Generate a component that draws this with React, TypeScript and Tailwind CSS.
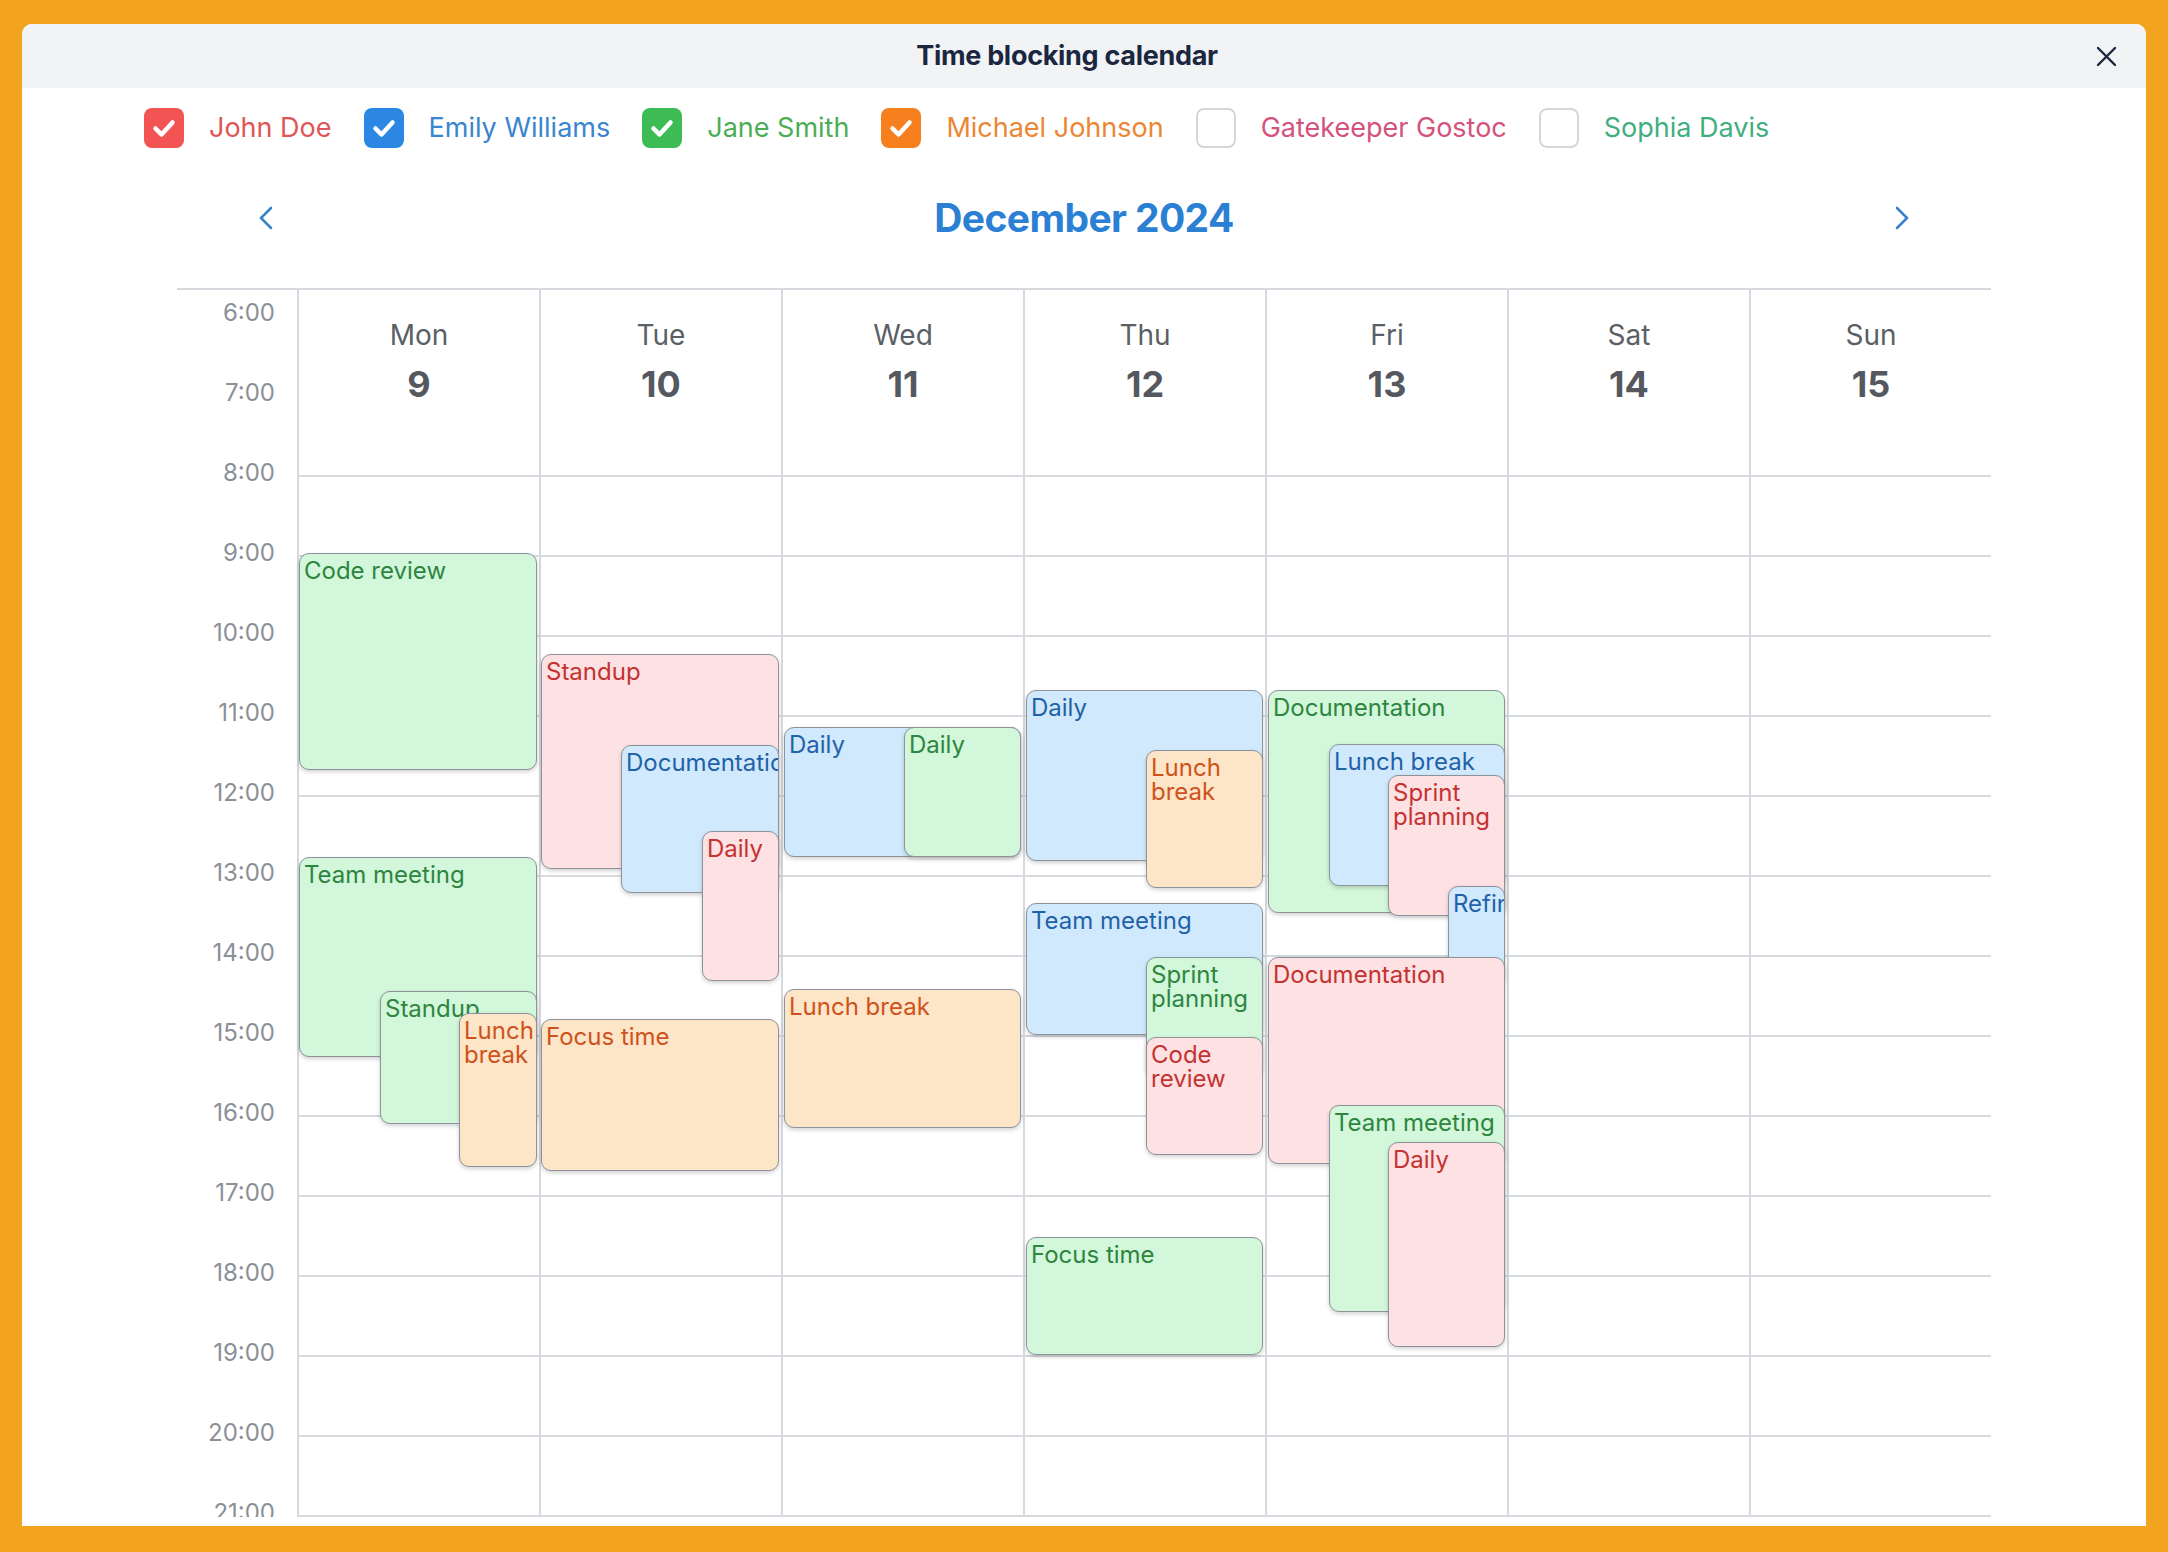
import React from "react";

type Color = "g" | "p" | "b" | "o";
type Ev = { day: number; title: string; top: number; h: number; left: number; c: Color };

const evStyles: Record<Color, string> = {
  g: "bg-[#d2f7da] text-[#2e8540]",
  p: "bg-[#fde1e3] text-[#c53232]",
  b: "bg-[#d1e9fc] text-[#1f62a8]",
  o: "bg-[#fde5c8] text-[#cf521c]",
};

const events: Ev[] = [
  { day: 0, title: "Code review", top: 78, h: 217, left: 0, c: "g" },
  { day: 0, title: "Team meeting", top: 382, h: 200, left: 0, c: "g" },
  { day: 0, title: "Standup", top: 516, h: 133, left: 81, c: "g" },
  { day: 0, title: "Lunch break", top: 538, h: 154, left: 160, c: "o" },
  { day: 1, title: "Standup", top: 179, h: 215, left: 0, c: "p" },
  { day: 1, title: "Documentation", top: 270, h: 148, left: 80, c: "b" },
  { day: 1, title: "Daily", top: 356, h: 150, left: 161, c: "p" },
  { day: 1, title: "Focus time", top: 544, h: 152, left: 0, c: "o" },
  { day: 2, title: "Daily", top: 252, h: 130, left: 1, c: "b" },
  { day: 2, title: "Daily", top: 252, h: 130, left: 121, c: "g" },
  { day: 2, title: "Lunch break", top: 514, h: 139, left: 1, c: "o" },
  { day: 3, title: "Daily", top: 215, h: 171, left: 1, c: "b" },
  { day: 3, title: "Lunch break", top: 275, h: 138, left: 121, c: "o" },
  { day: 3, title: "Team meeting", top: 428, h: 132, left: 1, c: "b" },
  { day: 3, title: "Sprint planning", top: 482, h: 120, left: 121, c: "g" },
  { day: 3, title: "Code review", top: 562, h: 118, left: 121, c: "p" },
  { day: 3, title: "Focus time", top: 762, h: 118, left: 1, c: "g" },
  { day: 4, title: "Documentation", top: 215, h: 223, left: 1, c: "g" },
  { day: 4, title: "Lunch break", top: 269, h: 142, left: 62, c: "b" },
  { day: 4, title: "Sprint planning", top: 300, h: 141, left: 121, c: "p" },
  { day: 4, title: "Refinement", top: 411, h: 100, left: 181, c: "b" },
  { day: 4, title: "Documentation", top: 482, h: 207, left: 1, c: "p" },
  { day: 4, title: "Team meeting", top: 630, h: 207, left: 62, c: "g" },
  { day: 4, title: "Daily", top: 667, h: 205, left: 121, c: "p" },
];

const people = [
  { name: "John Doe", checked: true, box: "bg-[#f25454]", text: "text-[#e05656]" },
  { name: "Emily Williams", checked: true, box: "bg-[#2b87e3]", text: "text-[#3a85cf]" },
  { name: "Jane Smith", checked: true, box: "bg-[#3dbb55]", text: "text-[#4bae57]" },
  { name: "Michael Johnson", checked: true, box: "bg-[#f77f1e]", text: "text-[#ec8633]" },
  { name: "Gatekeeper Gostoc", checked: false, box: "", text: "text-[#d4527c]" },
  { name: "Sophia Davis", checked: false, box: "", text: "text-[#3fae80]" },
];

const days = [
  { n: "Mon", d: 9 },
  { n: "Tue", d: 10 },
  { n: "Wed", d: 11 },
  { n: "Thu", d: 12 },
  { n: "Fri", d: 13 },
  { n: "Sat", d: 14 },
  { n: "Sun", d: 15 },
];

const timeHours = Array.from({ length: 16 }, (_, i) => i + 6);
const bodyHours = Array.from({ length: 14 }, (_, i) => i + 8);

function Check() {
  return (
    <svg width="40" height="40" viewBox="0 0 40 40" fill="none">
      <path d="M11.5 20.5 L17.5 26.5 L28.5 14.5" stroke="white" strokeWidth="4.5" strokeLinecap="round" strokeLinejoin="round" />
    </svg>
  );
}

export default function App() {
  return (
    <div className="w-[2168px] h-[1552px] bg-[#f2a41f] pt-[24px] px-[22px] overflow-hidden" style={{ fontFamily: "Inter, 'Noto Sans', sans-serif" }}>
      <div className="bg-white rounded-t-[10px] h-[1502px] flex flex-col overflow-hidden">
        {/* header */}
        <div className="h-[64px] shrink-0 bg-[#f1f3f5] relative flex items-center justify-center pr-[34px]">
          <div className="text-[27px] font-bold text-[#1b2640] tracking-[-0.3px]">Time blocking calendar</div>
          <button className="absolute right-[29px] top-[21px] w-[22px] h-[22px] flex items-center justify-center">
            <svg width="21" height="21" viewBox="0 0 21 21" fill="none">
              <path d="M2 2 L19 19 M19 2 L2 19" stroke="#1b2640" strokeWidth="2.4" strokeLinecap="round" />
            </svg>
          </button>
        </div>

        {/* people */}
        <div className="mt-[20px] h-[40px] shrink-0 flex items-center pl-[122px] gap-[32px]">
          {people.map((p) => (
            <div key={p.name} className="flex items-center gap-[25px]">
              {p.checked ? (
                <div className={`w-[40px] h-[40px] rounded-[8px] ${p.box} flex items-center justify-center`}>
                  <Check />
                </div>
              ) : (
                <div className="w-[40px] h-[40px] rounded-[8px] border-2 border-[#d3d6da] bg-white" />
              )}
              <span className={`text-[27px] leading-[40px] ${p.text}`}>{p.name}</span>
            </div>
          ))}
        </div>

        {/* month nav */}
        <div className="mt-[40px] h-[60px] shrink-0 flex items-center justify-between px-[230px]">
          <button className="w-[28px] h-[28px] flex items-center justify-center">
            <svg width="16" height="26" viewBox="0 0 16 26" fill="none">
              <path d="M13 3 L3 13 L13 23" stroke="#3b84cc" strokeWidth="2.6" strokeLinecap="round" strokeLinejoin="round" />
            </svg>
          </button>
          <div className="text-[39px] font-bold text-[#2b80d4] leading-[48px] tracking-[-0.6px]">December 2024</div>
          <button className="w-[28px] h-[28px] flex items-center justify-center">
            <svg width="16" height="26" viewBox="0 0 16 26" fill="none">
              <path d="M3 3 L13 13 L3 23" stroke="#3b84cc" strokeWidth="2.6" strokeLinecap="round" strokeLinejoin="round" />
            </svg>
          </button>
        </div>

        {/* grid */}
        <div className="mt-[40px] mx-[155px] h-[1229px] shrink-0 overflow-hidden border-t-2 border-[#d6d9dd] flex">
          <div className="w-[120px] shrink-0 pt-[8px]">
            {timeHours.map((h) => (
              <div key={h} className="h-[80px] text-right pr-[22px] text-[24px] leading-[30px] text-[#8b9097]">
                {h}:00
              </div>
            ))}
          </div>
          <div className="flex-1 grid grid-cols-7">
            {days.map((d, di) => (
              <div key={d.n} className="border-l-2 border-[#d6d9dd] flex flex-col min-w-0">
                <div className="h-[185px] shrink-0 flex flex-col items-center pt-[28px]">
                  <div className="text-[28px] leading-[34px] text-[#5a5f66]">{d.n}</div>
                  <div className="mt-[12px] text-[36px] leading-[40px] font-bold text-[#55595f]">{d.d}</div>
                </div>
                <div className="relative">
                  {bodyHours.map((h) => (
                    <div key={h} className="h-[80px] border-t-2 border-[#d6d9dd]" />
                  ))}
                  {events
                    .filter((e) => e.day === di)
                    .map((e, i) => (
                      <div
                        key={i}
                        className={`absolute right-[2px] rounded-[10px] border-[1.5px] border-[#8c939b] overflow-hidden px-[4px] pt-[5px] shadow-[0_2px_4px_rgba(0,0,0,0.18)] ${evStyles[e.c]}`}
                        style={{ top: e.top, height: e.h, left: e.left }}
                      >
                        <div className="text-[24px] leading-[24px] whitespace-normal break-normal">{e.title}</div>
                      </div>
                    ))}
                </div>
              </div>
            ))}
          </div>
        </div>
      </div>
    </div>
  );
}
